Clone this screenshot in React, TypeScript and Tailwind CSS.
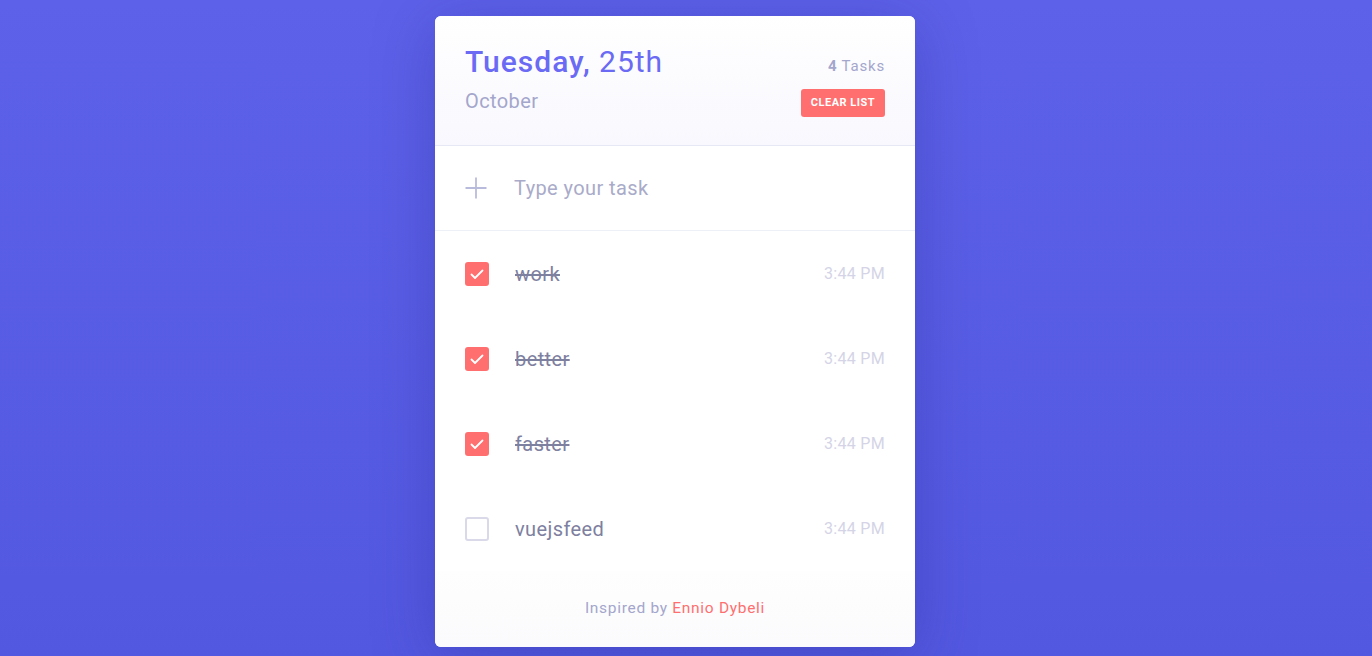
import React from 'react';

const tasks = [
  { title: 'work', done: true },
  { title: 'better', done: true },
  { title: 'faster', done: true },
  { title: 'vuejsfeed', done: false },
];

function Check({ done }: { done: boolean }) {
  if (!done) {
    return <span className="h-6 w-6 shrink-0 rounded-[3px] border-2 border-[#d9d9ea] bg-white" />;
  }
  return (
    <span className="flex h-6 w-6 shrink-0 items-center justify-center rounded-[3px] bg-[#ff6f6f]">
      <svg width="24" height="24" viewBox="0 0 24 24" fill="none">
        <path d="M6.5 12.5 10 16 17.5 8.5" stroke="#fff" strokeWidth="1.8" strokeLinecap="round" strokeLinejoin="round" />
      </svg>
    </span>
  );
}

export default function App() {
  return (
    <div
      className="flex h-[656px] w-full justify-center bg-gradient-to-b from-[#5d61e9] to-[#5358e1] pt-4 pr-[22px]"
      style={{ fontFamily: 'Roboto, "Noto Sans", sans-serif' }}
    >
      <div className="flex h-[631px] w-[480px] flex-col overflow-hidden rounded-md bg-white shadow-[0_10px_60px_rgba(40,40,140,0.35)]">
        <div className="flex justify-between border-b border-[#e6e8f5] bg-gradient-to-b from-white to-[#f8f8fe] px-[30px] pt-[28px] pb-[28px]">
          <div>
            <h1 className="text-[30px] leading-[36px] tracking-[1px] text-[#6a6af4]">
              <span className="font-medium">Tuesday,</span> 25th
            </h1>
            <p className="mt-[7px] text-[20px] leading-[28px] tracking-[0.4px] text-[#a4a6cc]">October</p>
          </div>
          <div className="mt-3 flex flex-col items-end">
            <p className="text-[15px] leading-5 tracking-[0.8px] text-[#a4a6cc]">
              <span className="font-bold">4</span> Tasks
            </p>
            <button className="mt-[13px] h-7 w-[84px] rounded-[3px] bg-[#ff6f6f] text-[11px] font-bold uppercase tracking-[0.5px] text-white">
              Clear list
            </button>
          </div>
        </div>

        <div className="flex h-[85px] items-center gap-[27px] border-b border-[#eef0f7] px-[30px]">
          <svg width="22" height="22" viewBox="0 0 22 22" className="shrink-0">
            <path d="M11 0.5V21.5M0.5 11H21.5" stroke="#b9bbdc" strokeWidth="1.8" />
          </svg>
          <input
            className="w-full bg-transparent text-[20px] tracking-[0.4px] text-[#7e80a0] outline-none placeholder:text-[#a9abc9]"
            placeholder="Type your task"
          />
        </div>

        <ul>
          {tasks.map((t) => (
            <li key={t.title} className="flex h-[85px] items-center px-[30px]">
              <Check done={t.done} />
              <span
                className={`ml-[26px] flex-1 text-[20px] tracking-[0.4px] text-[#7e80a0] ${t.done ? 'line-through decoration-[#7e80a0]' : ''}`}
              >
                {t.title}
              </span>
              <span className="text-[16px] tracking-[0.3px] text-[#d4d4e6]">3:44 PM</span>
            </li>
          ))}
        </ul>

        <div className="flex flex-1 items-center justify-center bg-gradient-to-b from-[#fefefe] to-[#fbfbfd] text-[15.5px] tracking-[0.7px] text-[#a4a6cc]">
          <p>
            Inspired by <span className="text-[#ff6f6f]">Ennio Dybeli</span>
          </p>
        </div>
      </div>
    </div>
  );
}
